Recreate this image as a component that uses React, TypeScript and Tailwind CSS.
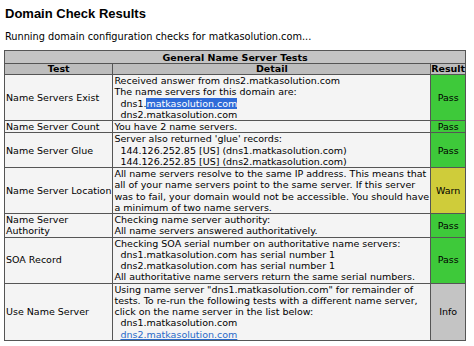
import React from "react"

type Row = {
  test: React.ReactNode
  detail: React.ReactNode
  result: "Pass" | "Warn" | "Info"
}

const resultColor: Record<Row["result"], string> = {
  Pass: "bg-[#3ec93a]",
  Warn: "bg-[#cfcc3a]",
  Info: "bg-[#c4c4c4]",
}

const Ind = ({ children }: { children: React.ReactNode }) => <div className="pl-[6px]">{children}</div>

const rows: Row[] = [
  {
    test: "Name Servers Exist",
    detail: (
      <>
        <div>Received answer from dns2.matkasolution.com</div>
        <div>The name servers for this domain are:</div>
        <Ind>
          dns1.<span className="bg-[#2f6bd8] text-white">matkasolution.com</span>
        </Ind>
        <Ind>dns2.matkasolution.com</Ind>
      </>
    ),
    result: "Pass",
  },
  { test: "Name Server Count", detail: "You have 2 name servers.", result: "Pass" },
  {
    test: "Name Server Glue",
    detail: (
      <>
        <div>Server also returned 'glue' records:</div>
        <Ind>144.126.252.85 [US] (dns1.matkasolution.com)</Ind>
        <Ind>144.126.252.85 [US] (dns2.matkasolution.com)</Ind>
      </>
    ),
    result: "Pass",
  },
  {
    test: "Name Server Location",
    detail: (
      <>
        <div>All name servers resolve to the same IP address. This means that</div>
        <div>all of your name servers point to the same server. If this server</div>
        <div>was to fail, your domain would not be accessible. You should have</div>
        <div>a minimum of two name servers.</div>
      </>
    ),
    result: "Warn",
  },
  {
    test: (
      <>
        Name Server
        <br />
        Authority
      </>
    ),
    detail: (
      <>
        <div>Checking name server authority:</div>
        <div>All name servers answered authoritatively.</div>
      </>
    ),
    result: "Pass",
  },
  {
    test: "SOA Record",
    detail: (
      <>
        <div>Checking SOA serial number on authoritative name servers:</div>
        <Ind>dns1.matkasolution.com has serial number 1</Ind>
        <Ind>dns2.matkasolution.com has serial number 1</Ind>
        <div>All authoritative name servers return the same serial numbers.</div>
      </>
    ),
    result: "Pass",
  },
  {
    test: "Use Name Server",
    detail: (
      <>
        <div>Using name server "dns1.matkasolution.com" for remainder of</div>
        <div>tests. To re-run the following tests with a different name server,</div>
        <div>click on the name server in the list below:</div>
        <Ind>dns1.matkasolution.com</Ind>
        <Ind>
          <a href="#" className="text-[#2a6bc9] underline">
            dns2.matkasolution.com
          </a>
        </Ind>
      </>
    ),
    result: "Info",
  },
]

export default function App() {
  return (
    <div className="w-[474px] h-[346px] bg-white text-black overflow-hidden">
      <h1 className="pl-[5px] pt-[5px] text-[13px] font-bold leading-[17px] font-['Liberation_Sans',Arial,sans-serif]">
        Domain Check Results
      </h1>
      <p className="pl-[5px] mt-[8px] text-[9.75px] leading-[13px] whitespace-nowrap font-['DejaVu_Sans',Verdana,sans-serif]">
        Running domain configuration checks for matkasolution.com...
      </p>

      <table className="ml-[4px] mt-[7px] w-[461px] border-collapse border border-[#444] text-[9.5px] leading-[11.25px] font-['DejaVu_Sans',Verdana,sans-serif]">
        <thead>
          <tr>
            <th colSpan={3} className="bg-[#c4c4c4] border border-[#555] font-bold h-[13px] leading-[11px] p-0">
              General Name Server Tests
            </th>
          </tr>
          <tr className="bg-[#bdbdbd]">
            <th className="w-[106px] border border-[#555] font-bold p-0 h-[11px] leading-[10px]">Test</th>
            <th className="border border-[#555] font-bold p-0 leading-[10px]">Detail</th>
            <th className="w-[35px] border border-[#555] font-bold p-0 leading-[10px]">Result</th>
          </tr>
        </thead>
        <tbody>
          {rows.map((r, i) => (
            <tr key={i} className="bg-[#f4f4f4]">
              <td className="border border-[#555] px-[1px] align-middle whitespace-nowrap">{r.test}</td>
              <td className="border border-[#555] px-[1px] align-top whitespace-nowrap">{r.detail}</td>
              <td className={`border border-[#555] text-center align-middle ${resultColor[r.result]}`}>{r.result}</td>
            </tr>
          ))}
        </tbody>
      </table>
    </div>
  )
}
